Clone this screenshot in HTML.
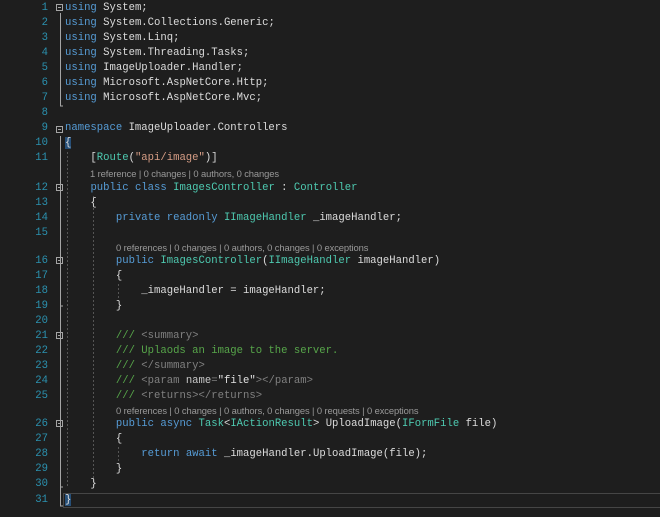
<!DOCTYPE html>
<html><head><meta charset="utf-8"><style>
html,body{margin:0;padding:0;background:#1e1e1e;width:660px;height:517px;overflow:hidden;position:relative}
.ln{position:absolute;left:0;width:48px;text-align:right;font:10.6px/15px "Liberation Mono",monospace;color:#2b91af}
.c{position:absolute;left:65px;font:10.6px/15px "Liberation Mono",monospace;color:#dcdcdc;white-space:pre}
.cl{position:absolute;font:9.4px/13px "Liberation Sans",sans-serif;color:#999;white-space:pre;letter-spacing:-0.1px}
.k{color:#569cd6}.t{color:#4ec9b0}.s{color:#d69d85}.g{color:#57a64a}.x{color:#808080}
.fb{position:absolute;left:56px;width:7px;height:7px;border:1px solid #a5a5a5;box-sizing:border-box}
.fb:after{content:"";position:absolute;left:1px;top:2px;width:3px;height:1px;background:#a5a5a5}
</style></head><body>
<svg width="660" height="517" style="position:absolute;left:0;top:0">
<g stroke="#a5a5a5" stroke-width="1" fill="none">
<path d="M60.5 13V106H63"/>
<path d="M60.5 136V506H63"/>
<path d="M60.5 193V487H63"/>
<path d="M60.5 306H63"/>
</g>
<g stroke="#555" stroke-width="1" stroke-dasharray="2,2">
<path d="M67.5 152V487"/>
<path d="M93.5 196V486"/>
<path d="M118.5 284V298"/>
<path d="M118.5 447V461"/>
</g>
<rect x="63.5" y="493.5" width="600" height="14" fill="none" stroke="#464646"/>
</svg>
<div class="fb" style="top:4px"></div>
<div class="fb" style="top:126px"></div>
<div class="fb" style="top:184px"></div>
<div class="fb" style="top:257px"></div>
<div class="fb" style="top:332px"></div>
<div class="fb" style="top:420px"></div>

<div class="ln" style="top:1px">1</div><div class="c" style="top:1px"><span class="k">using</span> System;</div>
<div class="ln" style="top:16px">2</div><div class="c" style="top:16px"><span class="k">using</span> System.Collections.Generic;</div>
<div class="ln" style="top:31px">3</div><div class="c" style="top:31px"><span class="k">using</span> System.Linq;</div>
<div class="ln" style="top:46px">4</div><div class="c" style="top:46px"><span class="k">using</span> System.Threading.Tasks;</div>
<div class="ln" style="top:61px">5</div><div class="c" style="top:61px"><span class="k">using</span> ImageUploader.Handler;</div>
<div class="ln" style="top:76px">6</div><div class="c" style="top:76px"><span class="k">using</span> Microsoft.AspNetCore.Http;</div>
<div class="ln" style="top:91px">7</div><div class="c" style="top:91px"><span class="k">using</span> Microsoft.AspNetCore.Mvc;</div>
<div class="ln" style="top:106px">8</div>
<div class="ln" style="top:121px">9</div><div class="c" style="top:121px"><span class="k">namespace</span> ImageUploader.Controllers</div>
<div class="ln" style="top:136px">10</div><div class="c" style="top:136px"><span style="background:#264f78">{</span></div>
<div class="ln" style="top:151px">11</div><div class="c" style="top:151px">    [<span class="t">Route</span>(<span class="s">"api/image"</span>)]</div>
<div class="cl" style="top:167px;left:90px">1 reference | 0 changes | 0 authors, 0 changes</div>
<div class="ln" style="top:181px">12</div><div class="c" style="top:181px">    <span class="k">public</span> <span class="k">class</span> <span class="t">ImagesController</span> : <span class="t">Controller</span></div>
<div class="ln" style="top:196px">13</div><div class="c" style="top:196px">    {</div>
<div class="ln" style="top:211px">14</div><div class="c" style="top:211px">        <span class="k">private</span> <span class="k">readonly</span> <span class="t">IImageHandler</span> _imageHandler;</div>
<div class="ln" style="top:226px">15</div>
<div class="cl" style="top:241px;left:116px">0 references | 0 changes | 0 authors, 0 changes | 0 exceptions</div>
<div class="ln" style="top:254px">16</div><div class="c" style="top:254px">        <span class="k">public</span> <span class="t">ImagesController</span>(<span class="t">IImageHandler</span> imageHandler)</div>
<div class="ln" style="top:269px">17</div><div class="c" style="top:269px">        {</div>
<div class="ln" style="top:284px">18</div><div class="c" style="top:284px">            _imageHandler = imageHandler;</div>
<div class="ln" style="top:299px">19</div><div class="c" style="top:299px">        }</div>
<div class="ln" style="top:314px">20</div>
<div class="ln" style="top:329px">21</div><div class="c g" style="top:329px">        /// <span class="x">&lt;summary&gt;</span></div>
<div class="ln" style="top:344px">22</div><div class="c g" style="top:344px">        /// Uplaods an image to the server.</div>
<div class="ln" style="top:359px">23</div><div class="c g" style="top:359px">        /// <span class="x">&lt;/summary&gt;</span></div>
<div class="ln" style="top:374px">24</div><div class="c g" style="top:374px">        /// <span class="x">&lt;param </span><span style="color:#c8c8c8">name</span><span class="x">=</span><span style="color:#e0e0e0">"file"</span><span class="x">&gt;&lt;/param&gt;</span></div>
<div class="ln" style="top:389px">25</div><div class="c g" style="top:389px">        /// <span class="x">&lt;returns&gt;&lt;/returns&gt;</span></div>
<div class="cl" style="top:404px;left:116px">0 references | 0 changes | 0 authors, 0 changes | 0 requests | 0 exceptions</div>
<div class="ln" style="top:417px">26</div><div class="c" style="top:417px">        <span class="k">public</span> <span class="k">async</span> <span class="t">Task</span>&lt;<span class="t">IActionResult</span>&gt; UploadImage(<span class="t">IFormFile</span> file)</div>
<div class="ln" style="top:432px">27</div><div class="c" style="top:432px">        {</div>
<div class="ln" style="top:447px">28</div><div class="c" style="top:447px">            <span class="k">return</span> <span class="k">await</span> _imageHandler.UploadImage(file);</div>
<div class="ln" style="top:462px">29</div><div class="c" style="top:462px">        }</div>
<div class="ln" style="top:477px">30</div><div class="c" style="top:477px">    }</div>
<div class="ln" style="top:493px">31</div><div class="c" style="top:493px"><span style="background:#264f78">}</span></div>
</body></html>
